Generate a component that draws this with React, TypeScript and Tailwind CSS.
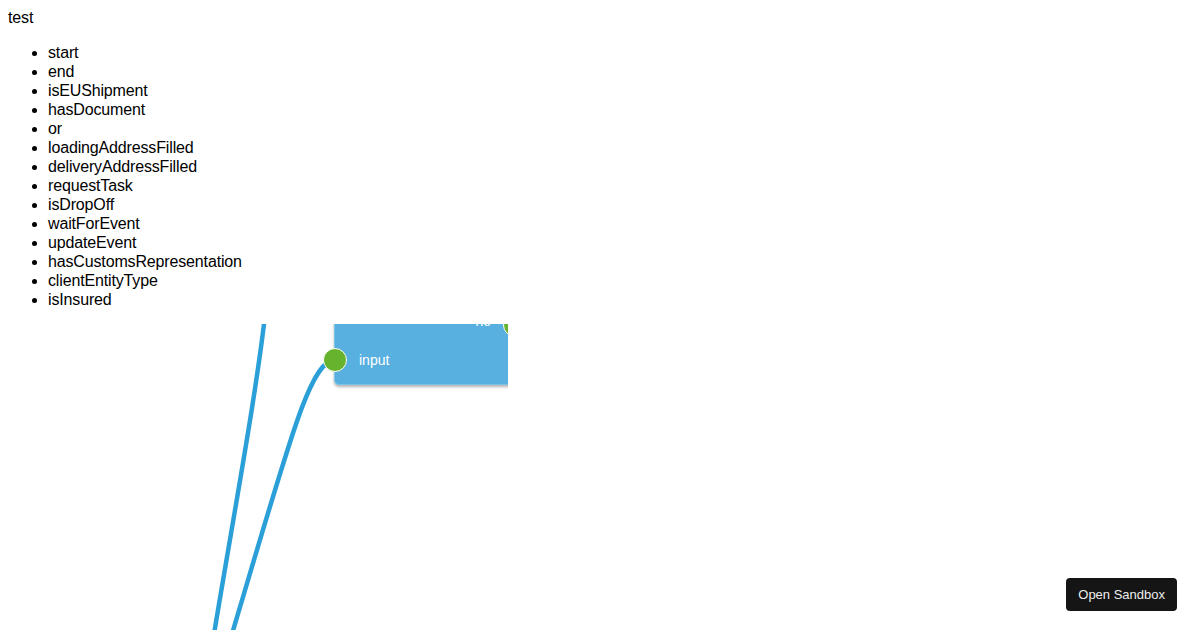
import React from 'react';

const items = [
  'start',
  'end',
  'isEUShipment',
  'hasDocument',
  'or',
  'loadingAddressFilled',
  'deliveryAddressFilled',
  'requestTask',
  'isDropOff',
  'waitForEvent',
  'updateEvent',
  'hasCustomsRepresentation',
  'clientEntityType',
  'isInsured',
];

export default function App() {
  return (
    <div className="min-h-screen bg-white p-2 text-black text-[16px] leading-[19px] tracking-[-0.15px] font-['Liberation_Sans',Arial,sans-serif]">
      <div>test</div>
      <ul className="mt-4 mb-[15px] list-disc pl-10">
        {items.map((it) => (
          <li key={it}>{it}</li>
        ))}
      </ul>

      {/* editor canvas, clipped */}
      <div className="relative w-[500px] h-[306px] overflow-hidden tracking-normal">
        <svg className="absolute inset-0" width="500" height="306" viewBox="0 0 500 306">
          <path d="M 257 -8 C 247 75, 232 155, 206 310" fill="none" stroke="#2b9fd8" strokeWidth="4.5" />
          <path d="M 327 36 C 302 36, 282 116, 224 310" fill="none" stroke="#2b9fd8" strokeWidth="4.5" />
        </svg>

        <div className="absolute left-[326px] top-[-60px] w-[240px] h-[121px] rounded-[5px] bg-[#57b0df] border border-[#7cc3e8] shadow-[0_2px_3px_rgba(0,0,0,0.3)]">
          <div className="absolute right-[82px] top-[48px] text-white text-[14px] leading-[16px]">no</div>
          <div className="absolute left-[168px] top-[48px] w-6 h-6 rounded-full bg-[#68b32d] border border-white" />
          <div className="absolute left-[24px] top-[87px] text-white text-[14px] leading-[16px]">input</div>
        </div>

        <div className="absolute left-[315px] top-[24px] w-6 h-6 rounded-full bg-[#68b32d] border border-white" />
      </div>

      <button className="fixed bottom-[19px] right-[23px] h-[33px] px-3 rounded-[4px] bg-[#151515] text-[13px] tracking-normal text-[#eeeeee] font-['Liberation_Sans',Arial,sans-serif]">
        Open Sandbox
      </button>
    </div>
  );
}
